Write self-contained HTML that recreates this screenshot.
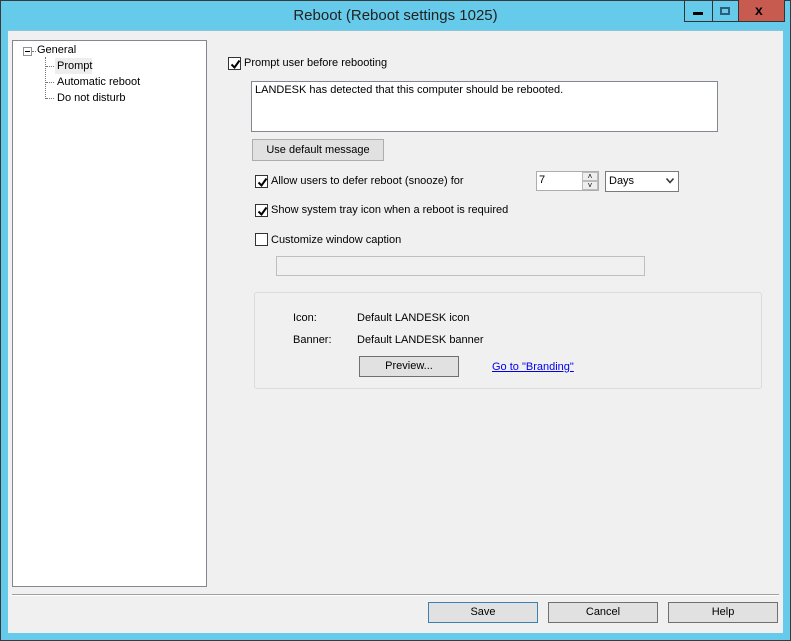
<!DOCTYPE html>
<html><head><style>
*{margin:0;padding:0;box-sizing:border-box}
body{width:791px;height:641px;background:#66cbea;font-family:"Liberation Sans",sans-serif;font-size:11px;color:#000;position:relative;overflow:hidden}
.a{position:absolute}
.win{left:0;top:0;width:791px;height:641px;border:1px solid #3a3a3a}
.client{left:8px;top:30px;width:775px;height:603px;background:#f0f0f0;border-top:1px solid #8cc4d8}
.cb{position:absolute;width:13px;height:13px;border:1px solid #333;background:#fff}
.cb svg{position:absolute;left:1px;top:1px}
.btn{position:absolute;background:#e1e1e1;border:1px solid #adadad;text-align:center;line-height:19px}
.t{position:absolute;white-space:nowrap}
</style></head><body>
<div class="a win"></div>
<div class="t" style="left:0;width:791px;text-align:center;top:7px;font-size:15px;color:#222">Reboot (Reboot settings 1025)</div>
<div class="a" style="left:684px;top:0;width:101px;height:22px;border:1px solid #333;border-top:none"></div>
<div class="a" style="left:712px;top:0;width:1px;height:22px;background:#333"></div>
<div class="a" style="left:738px;top:0;width:46px;height:21px;background:#c75b4f;border-left:1px solid #333"></div>
<div class="a" style="left:693px;top:12px;width:10px;height:3px;background:#000"></div>
<div class="a" style="left:720px;top:7px;width:10px;height:8px;border:2px solid #2d5d7a"></div>
<div class="t" style="left:755px;top:2px;font-size:14px;font-weight:bold">x</div>
<div class="a client"></div>
<div class="a" style="left:12px;top:40px;width:195px;height:547px;background:#fff;border:1px solid #828790"></div>
<div class="a" style="left:23px;top:47px;width:9px;height:9px;border:1px solid #919191;background:#fff"></div>
<div class="a" style="left:25px;top:51px;width:5px;height:1px;background:#000"></div>
<div class="a" style="left:32px;top:51px;width:4px;border-top:1px dotted #777"></div>
<div class="t" style="left:37px;top:44px">General</div>
<div class="a" style="left:45px;top:57px;height:42px;border-left:1px dotted #777"></div>
<div class="a" style="left:46px;top:66px;width:8px;border-top:1px dotted #777"></div>
<div class="a" style="left:46px;top:82px;width:8px;border-top:1px dotted #777"></div>
<div class="a" style="left:46px;top:98px;width:8px;border-top:1px dotted #777"></div>
<div class="a" style="left:55px;top:58px;width:37px;height:16px;background:#eee"></div>
<div class="t" style="left:57px;top:60px">Prompt</div>
<div class="t" style="left:57px;top:76px">Automatic reboot</div>
<div class="t" style="left:57px;top:92px">Do not disturb</div>
<div class="cb" style="left:228px;top:57px"><svg width="11" height="11"><path d="M1.5 5.5l3 3 5-7" stroke="#000" stroke-width="2" fill="none"/></svg></div>
<div class="t" style="left:244px;top:57px">Prompt user before rebooting</div>
<div class="a" style="left:251px;top:81px;width:467px;height:51px;background:#fff;border:1px solid #828790"></div>
<div class="t" style="left:255px;top:84px">LANDESK has detected that this computer should be rebooted.</div>
<div class="btn" style="left:252px;top:139px;width:132px;height:22px;line-height:20px">Use default message</div>
<div class="cb" style="left:255px;top:175px"><svg width="11" height="11"><path d="M1.5 5.5l3 3 5-7" stroke="#000" stroke-width="2" fill="none"/></svg></div>
<div class="t" style="left:271px;top:175px">Allow users to defer reboot (snooze) for</div>
<div class="a" style="left:536px;top:171px;width:63px;height:20px;background:#fff;border:1px solid #abadb3"></div>
<div class="t" style="left:539px;top:174px">7</div>
<div class="a" style="left:582px;top:172px;width:16px;height:9px;border:1px solid #bbb;background:#eee;font-size:8px;text-align:center;line-height:7px">˄</div>
<div class="a" style="left:582px;top:181px;width:16px;height:9px;border:1px solid #bbb;background:#eee;font-size:8px;text-align:center;line-height:7px">˅</div>
<div class="a" style="left:605px;top:171px;width:74px;height:21px;background:#fff;border:1px solid #7a7a7a"></div>
<div class="t" style="left:609px;top:175px">Days</div>
<svg class="a" style="left:666px;top:178px" width="8" height="6"><path d="M0.5 0.5l3.5 4 3.5-4" stroke="#333" stroke-width="1.5" fill="none"/></svg>
<div class="cb" style="left:255px;top:204px"><svg width="11" height="11"><path d="M1.5 5.5l3 3 5-7" stroke="#000" stroke-width="2" fill="none"/></svg></div>
<div class="t" style="left:271px;top:204px">Show system tray icon when a reboot is required</div>
<div class="cb" style="left:255px;top:233px"></div>
<div class="t" style="left:271px;top:234px">Customize window caption</div>
<div class="a" style="left:276px;top:256px;width:369px;height:20px;border:1px solid #bfbfbf;background:#f0f0f0"></div>
<div class="a" style="left:254px;top:292px;width:508px;height:97px;border:1px solid #dcdcdc;border-radius:3px"></div>
<div class="t" style="left:293px;top:312px">Icon:</div>
<div class="t" style="left:357px;top:312px">Default LANDESK icon</div>
<div class="t" style="left:293px;top:334px">Banner:</div>
<div class="t" style="left:357px;top:334px">Default LANDESK banner</div>
<div class="btn" style="left:359px;top:356px;width:100px;height:21px;border-color:#707070">Preview...</div>
<div class="t" style="left:492px;top:361px;color:#0000ee;text-decoration:underline">Go to "Branding"</div>
<div class="a" style="left:12px;top:594px;width:767px;height:1px;background:#a0a0a0"></div>
<div class="a" style="left:12px;top:595px;width:767px;height:1px;background:#fff"></div>
<div class="btn" style="left:428px;top:602px;width:110px;height:21px;border-color:#3c7fb1">Save</div>
<div class="btn" style="left:548px;top:602px;width:110px;height:21px;border-color:#707070">Cancel</div>
<div class="btn" style="left:668px;top:602px;width:110px;height:21px;border-color:#707070">Help</div>
</body></html>
